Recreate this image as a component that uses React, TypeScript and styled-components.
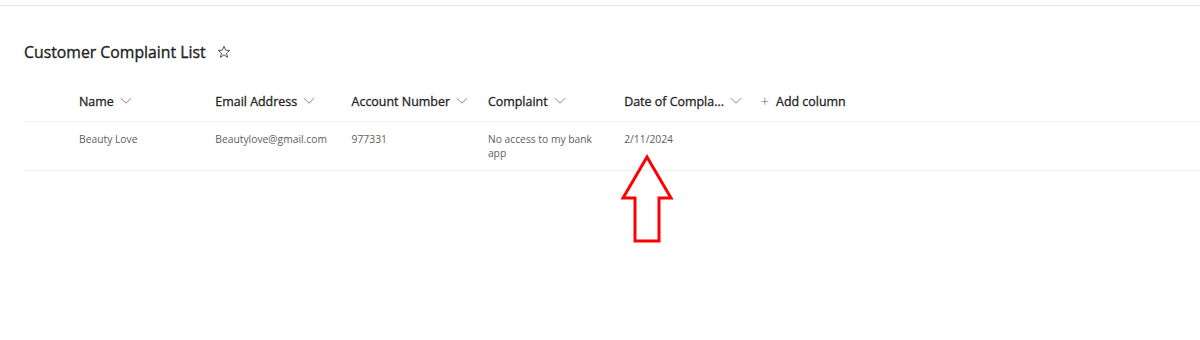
import { FC } from 'react';
import styled, { createGlobalStyle } from 'styled-components';

const GlobalStyle = createGlobalStyle`
  body {
    margin: 0;
    background: #ffffff;
    font-family: 'Segoe UI', 'Open Sans', 'Noto Sans', sans-serif;
  }
`;

interface Column {
  key: string;
  label: string;
}

const columns: Column[] = [
  { key: 'name', label: 'Name' },
  { key: 'email', label: 'Email Address' },
  { key: 'account', label: 'Account Number' },
  { key: 'complaint', label: 'Complaint' },
  { key: 'date', label: 'Date of Compla...' },
];

const rows: Record<string, string>[] = [
  {
    name: 'Beauty Love',
    email: 'Beautylove@gmail.com',
    account: '977331',
    complaint: 'No access to my bank app',
    date: '2/11/2024',
  },
];

const Chevron: FC = () => (
  <svg width="12" height="8" viewBox="0 0 12 8" fill="none">
    <path d="M0.8 1.2 L6 6.2 L11.2 1.2" stroke="#8a8886" strokeWidth="1" />
  </svg>
);

const Star: FC = () => (
  <svg width="14" height="14" viewBox="0 0 14 14" fill="none">
    <path
      d="M7 1.2 L8.6 5.2 L12.8 5.4 L9.5 8.1 L10.6 12.3 L7 9.9 L3.4 12.3 L4.5 8.1 L1.2 5.4 L5.4 5.2 Z"
      stroke="#444"
      strokeWidth="0.9"
      strokeLinejoin="round"
    />
  </svg>
);

const App: FC = () => {
  return (
    <>
      <GlobalStyle />
      <Page>
        <TopBar />
        <TitleRow>
          <Title>Customer Complaint List</Title>
          <Star />
        </TitleRow>
        <Table>
          <HeaderRow>
            <SelectCell />
            {columns.map((c) => (
              <HeaderCell key={c.key}>
                {c.label}
                <Chevron />
              </HeaderCell>
            ))}
            <AddColumn>
              <Plus>+</Plus>
              Add column
            </AddColumn>
          </HeaderRow>
          {rows.map((r, i) => (
            <DataRow key={i}>
              <SelectCell />
              {columns.map((c) => (
                <DataCell key={c.key}>{r[c.key]}</DataCell>
              ))}
            </DataRow>
          ))}
        </Table>
        <Arrow width="54" height="92" viewBox="0 0 54 92">
          <path
            d="M26 3 L50 44 L38 44 L38 87 L14 87 L14 44 L2 44 Z"
            fill="none"
            stroke="#ff0000"
            strokeWidth="3"
            strokeLinejoin="miter"
          />
        </Arrow>
      </Page>
    </>
  );
};

export default App;

const Page = styled.div`
  position: relative;
  width: 1200px;
  height: 340px;
  overflow: hidden;
`;

const TopBar = styled.div`
  height: 5px;
  border-bottom: 1px solid #e8e8e8;
`;

const TitleRow = styled.div`
  display: flex;
  align-items: center;
  gap: 11px;
  padding: 34px 0 0 24px;
  height: 24px;
`;

const Title = styled.h1`
  margin: 0;
  font-size: 15.8px;
  font-weight: 400;
  -webkit-text-stroke: 0.35px currentColor;
  color: #201f1e;
  line-height: 24px;
`;

const Table = styled.div`
  margin: 17px 0 0 24px;
  display: flex;
  flex-direction: column;
`;

const HeaderRow = styled.div`
  display: flex;
  align-items: center;
  height: 40px;
  border-bottom: 1px solid #f0f0f0;
`;

const SelectCell = styled.div`
  width: 55px;
  flex-shrink: 0;
`;

const HeaderCell = styled.div`
  width: 136.3px;
  flex-shrink: 0;
  display: flex;
  align-items: center;
  gap: 6px;
  font-size: 12.45px;
  font-weight: 400;
  -webkit-text-stroke: 0.3px currentColor;
  color: #252423;
  white-space: nowrap;
`;

const AddColumn = styled.div`
  display: flex;
  align-items: center;
  gap: 7px;
  font-size: 12.45px;
  font-weight: 400;
  -webkit-text-stroke: 0.3px currentColor;
  color: #252423;
`;

const Plus = styled.span`
  font-weight: 300;
  font-size: 15px;
  -webkit-text-stroke: 0;
  color: #605e5c;
`;

const DataRow = styled.div`
  display: flex;
  align-items: flex-start;
  height: 48px;
  border-bottom: 1px solid #f0f0f0;
`;

const DataCell = styled.div`
  width: 136.3px;
  flex-shrink: 0;
  padding: 10px 16px 0 0;
  box-sizing: border-box;
  font-size: 10.3px;
  line-height: 14px;
  color: #605e5c;
`;

const Arrow = styled.svg`
  position: absolute;
  left: 621px;
  top: 154px;
`;
